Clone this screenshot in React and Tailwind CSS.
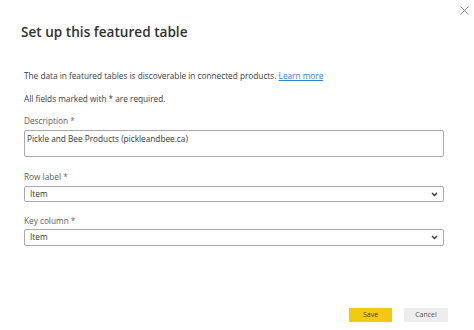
export default function App() {
  return (
    <div
      className="relative w-[474px] h-[330px] bg-white text-[#3b3b3b] overflow-hidden"
      style={{ fontFamily: '"Open Sans", "Noto Sans", Arial, sans-serif' }}
    >
      <button className="absolute right-[5px] top-[5px] w-[10px] h-[10px] flex items-center justify-center">
        <svg width="9" height="9" viewBox="0 0 9 9" fill="none" stroke="#8a8a8a" strokeWidth="1">
          <path d="M0.5 0.5 L8.5 8.5 M8.5 0.5 L0.5 8.5" />
        </svg>
      </button>

      <div className="pl-[21px] pt-[22px]">
        <h1 className="text-[13.6px] leading-[20px] font-semibold text-[#323130]">Set up this featured table</h1>
      </div>

      <div className="pl-[24px] pr-[30px] pt-[28px] flex flex-col">
        <p className="text-[8.25px] leading-[11px] text-[#3b3b3b]">
          The data in featured tables is discoverable in connected products.{' '}
          <span className="text-[#2f7fd3] underline">Learn more</span>
        </p>
        <p className="mt-[12px] text-[8.25px] leading-[11px] text-[#3b3b3b]">All fields marked with * are required.</p>

        <label className="mt-[11px] text-[8.25px] leading-[11px] text-[#5a5a5a]">
          Description <span className="text-[#8a5a5a]">*</span>
        </label>
        <div className="mt-[4px] w-[420px] h-[27px] border border-[#a8a8a8] rounded-[2px] px-[2px] pt-[2px] text-[8.25px] leading-[11px] text-[#333]">
          Pickle and Bee Products (pickleandbee.ca)
        </div>

        <label className="mt-[14px] text-[8.25px] leading-[11px] text-[#5a5a5a]">
          Row label <span className="text-[#8a5a5a]">*</span>
        </label>
        <div className="mt-[4px] w-[420px] h-[16px] border border-[#a8a8a8] rounded-[2px] pl-[5px] pr-[5px] flex items-center justify-between text-[8.25px] text-[#333]">
          <span>Item</span>
          <svg width="7" height="5" viewBox="0 0 7 5" fill="none" stroke="#333" strokeWidth="1.3">
            <path d="M1 1 L3.5 3.5 L6 1" />
          </svg>
        </div>

        <label className="mt-[13px] text-[8.25px] leading-[11px] text-[#5a5a5a]">
          Key column <span className="text-[#8a5a5a]">*</span>
        </label>
        <div className="mt-[3px] w-[420px] h-[17px] border border-[#a8a8a8] rounded-[2px] pl-[5px] pr-[5px] flex items-center justify-between text-[8.25px] text-[#333]">
          <span>Item</span>
          <svg width="7" height="5" viewBox="0 0 7 5" fill="none" stroke="#333" strokeWidth="1.3">
            <path d="M1 1 L3.5 3.5 L6 1" />
          </svg>
        </div>
      </div>

      <div className="mt-[62px] pr-[26px] flex justify-end gap-[12px]">
        <button className="w-[43px] h-[14px] bg-[#f2c811] text-[7px] leading-[14px] text-[#444]">Save</button>
        <button className="w-[44px] h-[14px] bg-[#ededed] text-[7px] leading-[14px] text-[#555]">Cancel</button>
      </div>
    </div>
  );
}
